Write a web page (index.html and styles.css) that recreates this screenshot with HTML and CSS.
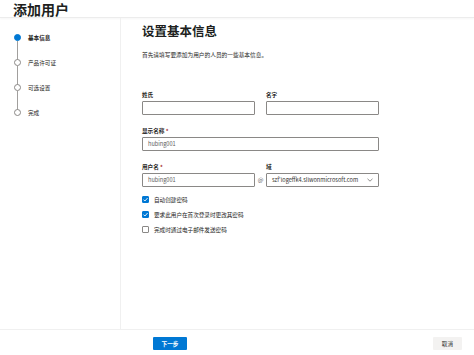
FILE: index.html
```html
<!DOCTYPE html>
<html lang="zh-CN">
<head>
    <meta charset="UTF-8">
    <meta name="viewport" content="width=device-width, initial-scale=1.0">
    <title>添加用户</title>
    <link rel="stylesheet" href="styles.css">
</head>
<body>
    <div class="panel">
        <header class="panel-header">
            <h1>添加用户</h1>
        </header>

        <div class="panel-body">
            <nav class="steps">
                <div class="step active"><span class="dot"></span><span class="step-label">基本信息</span></div>
                <div class="step"><span class="dot"></span><span class="step-label">产品许可证</span></div>
                <div class="step"><span class="dot"></span><span class="step-label">可选设置</span></div>
                <div class="step last"><span class="dot"></span><span class="step-label">完成</span></div>
            </nav>

            <main class="content">
                <h2>设置基本信息</h2>
                <p class="intro">首先请填写要添加为用户的人员的一些基本信息。</p>

                <div class="row pair">
                    <div class="field">
                        <label>姓氏</label>
                        <div class="input"></div>
                    </div>
                    <div class="field">
                        <label>名字</label>
                        <div class="input"></div>
                    </div>
                </div>

                <div class="row">
                    <div class="field">
                        <label>显示名称 <span class="req">*</span></label>
                        <div class="input">hubing001</div>
                    </div>
                </div>

                <div class="row pair">
                    <div class="field">
                        <label>用户名 <span class="req">*</span></label>
                        <div class="input">hubing001</div>
                    </div>
                    <span class="at">@</span>
                    <div class="field">
                        <label>域</label>
                        <div class="input select">
                            <span>szf'logeffk4.sIlwonmicrosoft.com</span>
                            <svg width="6" height="4" viewBox="0 0 6 4"><path d="M0.5 0.8 L3 3.2 L5.5 0.8" fill="none" stroke="#605e5c" stroke-width="0.7"/></svg>
                        </div>
                    </div>
                </div>

                <div class="checks">
                    <div class="check"><span class="box on"><svg width="7" height="7" viewBox="0 0 7 7"><path d="M1.5 3.6 L2.9 5 L5.6 2" fill="none" stroke="#fff" stroke-width="0.9"/></svg></span>自动创建密码</div>
                    <div class="check"><span class="box on"><svg width="7" height="7" viewBox="0 0 7 7"><path d="M1.5 3.6 L2.9 5 L5.6 2" fill="none" stroke="#fff" stroke-width="0.9"/></svg></span>要求此用户在首次登录时更改其密码</div>
                    <div class="check"><span class="box"></span>完成时通过电子邮件发送密码</div>
                </div>
            </main>
        </div>

        <footer class="panel-footer">
            <button class="btn primary">下一步</button>
            <button class="btn">取消</button>
        </footer>
    </div>
</body>
</html>
```

FILE: styles.css
```css
body {
    margin: 0;
    font-family: 'Noto Sans CJK SC', 'Noto Sans', sans-serif;
    color: #252423;
    background-color: #fff;
}
.panel {
    width: 474px;
    height: 355px;
    display: flex;
    flex-direction: column;
}
.panel-header {
    box-sizing: border-box;
    height: 18px;
    border-bottom: 1px solid #ececec;
    box-shadow: 0 1px 2px rgba(0, 0, 0, 0.04);
    padding: 2px 0 0 13px;
}
.panel-header h1 {
    margin: 0;
    font-size: 14px;
    line-height: 15px;
    font-weight: 600;
    color: #201f1e;
}
.panel-body {
    flex: 1;
    display: flex;
}
.steps {
    width: 120px;
    border-right: 1px solid #f0f0f0;
    padding-top: 7px;
}
.step {
    position: relative;
    display: flex;
    align-items: center;
    height: 25px;
    padding-left: 14px;
}
.step::after {
    content: '';
    position: absolute;
    left: 17px;
    top: 16px;
    height: 19px;
    border-left: 1px solid #a19f9d;
}
.step.last::after {
    display: none;
}
.dot {
    width: 5px;
    height: 5px;
    border: 1px solid #8a8886;
    border-radius: 50%;
    background-color: #fff;
}
.step.active .dot {
    background-color: #0078d4;
    border-color: #0078d4;
}
.step-label {
    margin-left: 7px;
    font-size: 5.6px;
}
.step.active .step-label {
    font-weight: 600;
}
.content {
    flex: 1;
    padding-left: 21px;
    padding-top: 4px;
}
.content h2 {
    margin: 0;
    font-size: 12.5px;
    line-height: 18px;
    font-weight: 600;
    color: #201f1e;
}
.intro {
    margin: 11px 0 0;
    font-size: 5.7px;
    line-height: 8px;
}
.row {
    width: 237px;
    margin-top: 12px;
}
.row:first-of-type {
    margin-top: 32px;
}
.row.pair {
    display: grid;
    grid-template-columns: 113px 11px 113px;
}
.row.pair .field + .field {
    grid-column: 3;
}
.at {
    grid-column: 2;
    align-self: end;
    text-align: center;
    font-size: 6px;
    line-height: 14px;
    color: #605e5c;
}
label {
    display: block;
    font-size: 5.6px;
    line-height: 8px;
    font-weight: 600;
    margin-bottom: 2px;
}
.req {
    color: #a4262c;
}
.input {
    box-sizing: border-box;
    height: 14px;
    border: 1px solid #8a8886;
    border-radius: 1px;
    padding: 0 5px;
    font-size: 5.6px;
    line-height: 12px;
    color: #605e5c;
}
.select {
    display: flex;
    justify-content: space-between;
    align-items: center;
    color: #323130;
}
.checks {
    margin-top: 5px;
}
.check {
    display: flex;
    align-items: center;
    height: 15px;
    font-size: 5.6px;
}
.box {
    box-sizing: border-box;
    width: 7px;
    height: 7px;
    border: 1px solid #8a8886;
    border-radius: 1px;
    margin-right: 5px;
    display: flex;
    align-items: center;
    justify-content: center;
}
.box.on {
    background-color: #0078d4;
    border-color: #0078d4;
}
.box svg {
    flex: none;
}
.panel-footer {
    box-sizing: border-box;
    height: 26px;
    border-top: 1px solid #f0f0f0;
    display: flex;
    justify-content: space-between;
    align-items: center;
    padding: 2px 12px 0 153px;
}
.btn {
    height: 13px;
    padding: 0 9px;
    border: none;
    border-radius: 1px;
    font-family: inherit;
    font-size: 5.6px;
    white-space: nowrap;
    background-color: #f3f2f1;
    color: #323130;
}
.btn.primary {
    width: 34px;
    padding: 0;
    background-color: #0078d4;
    color: #fff;
    font-weight: 600;
}
```
